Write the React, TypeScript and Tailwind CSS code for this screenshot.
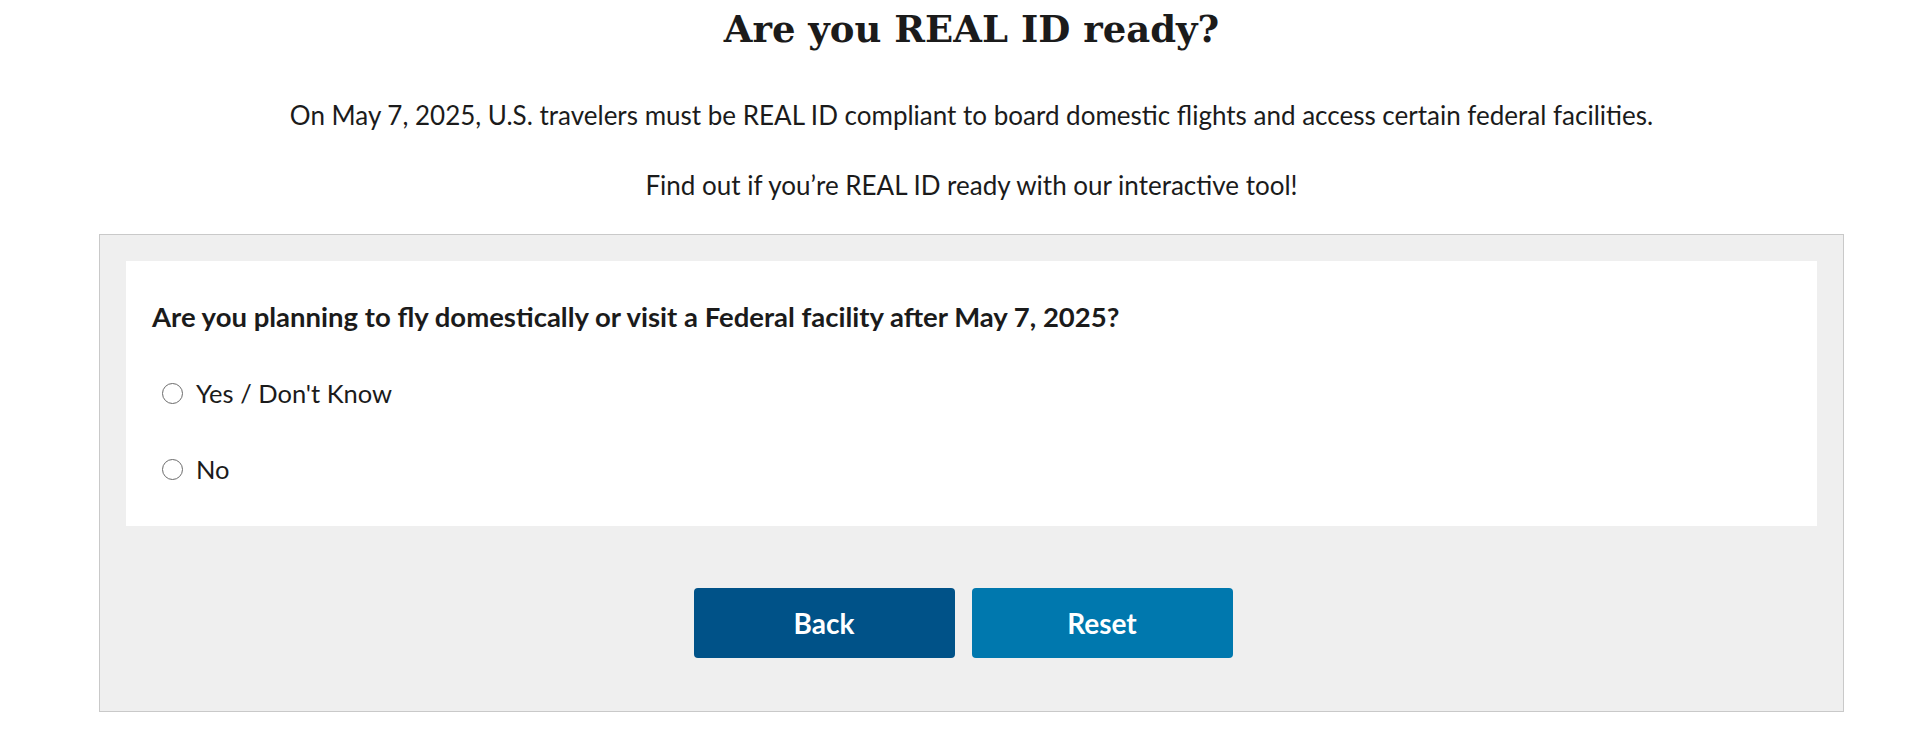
import React, { useState } from 'react';

const options = ["Yes / Don't Know", 'No'];

const body = "font-['Lato','Liberation_Sans',sans-serif]";

export default function App() {
  const [choice, setChoice] = useState<string | null>(null);

  return (
    <div className="min-h-screen w-full bg-white text-[#1b1b1b]">
      <div className="ml-[99px] flex w-[1745px] flex-col items-center">
        {/* Heading */}
        <h1 className="mt-[7px] h-[44px] font-['DejaVu_Serif',serif] text-[37px] leading-[44px] font-bold">
          Are you REAL ID ready?
        </h1>
        <p className={`${body} mt-[44px] text-[26px] leading-[40px]`}>
          On May 7, 2025, U.S. travelers must be REAL ID compliant to board domestic flights and access certain federal facilities.
        </p>
        <p className={`${body} mt-[30px] text-[26px] leading-[40px]`}>
          Find out if you’re REAL ID ready with our interactive tool!
        </p>

        {/* Interactive tool */}
        <div className="mt-[29px] w-full border border-[#c9c9c9] bg-[#efefef] px-[26px] pt-[26px] pb-[53px]">
          <div className={`${body} bg-white pt-[38px] pb-[19px] pl-[26px]`}>
            <p className="mb-[20px] h-[36px] text-[27.5px] leading-[36px] font-bold">
              Are you planning to fly domestically or visit a Federal facility after May 7, 2025?
            </p>
            {options.map(opt => (
              <label
                key={opt}
                className="flex h-[76px] cursor-pointer items-center pl-[10px] text-[25.5px]"
                onClick={() => setChoice(opt)}
              >
                <span className="flex h-[21px] w-[21px] items-center justify-center rounded-full border border-[#6b6b6b] bg-white">
                  {choice === opt && <span className="h-[11px] w-[11px] rounded-full bg-[#005288]" />}
                </span>
                <span className="ml-[13px]">{opt}</span>
              </label>
            ))}
          </div>

          <div className={`${body} mt-[62px] flex justify-center`}>
            <button className="mr-[17px] h-[70px] w-[261px] rounded-[4px] bg-[#005288] text-[28px] font-bold text-white">
              Back
            </button>
            <button
              className="mr-[17px] h-[70px] w-[261px] rounded-[4px] bg-[#0078ae] text-[28px] font-bold text-white"
              onClick={() => setChoice(null)}
            >
              Reset
            </button>
          </div>
        </div>
      </div>
    </div>
  );
}
